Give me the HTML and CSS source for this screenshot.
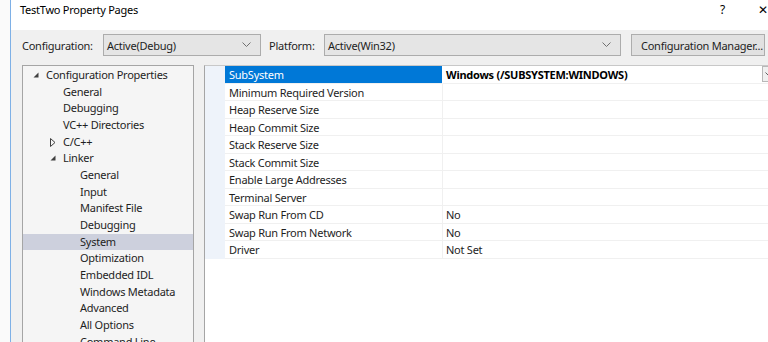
FILE: index.html
```html
<!DOCTYPE html>
<html lang="en">
<head>
    <meta charset="UTF-8">
    <title>TestTwo Property Pages</title>
<link rel="stylesheet" href="styles.css">
</head>
<body>
<div class="dialog">
    <div class="titleBar">
        <span class="title">TestTwo Property Pages</span>
        <span class="help">?</span>
        <span class="close">&#x2715;</span>
    </div>
    <div class="toolbar">
        <span class="label">Configuration:</span>
        <div class="combo configCombo">
            <span>Active(Debug)</span>
            <svg class="chev" width="9" height="6" viewBox="0 0 9 6"><polyline points="0.5,0.5 4.5,4.5 8.5,0.5" fill="none" stroke="#707070" stroke-width="1"/></svg>
        </div>
        <span class="label platLabel">Platform:</span>
        <div class="combo platCombo">
            <span>Active(Win32)</span>
            <svg class="chev" width="9" height="6" viewBox="0 0 9 6"><polyline points="0.5,0.5 4.5,4.5 8.5,0.5" fill="none" stroke="#707070" stroke-width="1"/></svg>
        </div>
        <button type="button" class="managerBtn">Configuration Manager...</button>
    </div>
    <div class="main">
        <div class="tree">
            <div class="node lvl1"><svg class="arrow" width="8" height="8" viewBox="0 0 8 8"><polygon points="6.5,1.5 6.5,6.5 1.5,6.5" fill="#404040"/></svg>Configuration Properties</div>
            <div class="node lvl2">General</div>
            <div class="node lvl2">Debugging</div>
            <div class="node lvl2">VC++ Directories</div>
            <div class="node lvl2"><svg class="arrow" width="8" height="9" viewBox="0 0 8 9"><polygon points="1.5,0.5 6,4.5 1.5,8.5" fill="none" stroke="#404040" stroke-width="1"/></svg>C/C++</div>
            <div class="node lvl2"><svg class="arrow" width="8" height="8" viewBox="0 0 8 8"><polygon points="6.5,1.5 6.5,6.5 1.5,6.5" fill="#404040"/></svg>Linker</div>
            <div class="node lvl3">General</div>
            <div class="node lvl3">Input</div>
            <div class="node lvl3">Manifest File</div>
            <div class="node lvl3">Debugging</div>
            <div class="node lvl3 selected">System</div>
            <div class="node lvl3">Optimization</div>
            <div class="node lvl3">Embedded IDL</div>
            <div class="node lvl3">Windows Metadata</div>
            <div class="node lvl3">Advanced</div>
            <div class="node lvl3">All Options</div>
            <div class="node lvl3">Command Line</div>
        </div>
        <div class="grid">
            <div class="row current">
                <div class="gutter"></div>
                <div class="name">SubSystem</div>
                <div class="value bold">Windows (/SUBSYSTEM:WINDOWS)
                    <span class="dropBtn"><svg width="7" height="5" viewBox="0 0 7 5"><polyline points="0.5,0.5 3.5,3.5 6.5,0.5" fill="none" stroke="#606060" stroke-width="1"/></svg></span>
                </div>
            </div>
            <div class="row"><div class="gutter"></div><div class="name">Minimum Required Version</div><div class="value"></div></div>
            <div class="row"><div class="gutter"></div><div class="name">Heap Reserve Size</div><div class="value"></div></div>
            <div class="row"><div class="gutter"></div><div class="name">Heap Commit Size</div><div class="value"></div></div>
            <div class="row"><div class="gutter"></div><div class="name">Stack Reserve Size</div><div class="value"></div></div>
            <div class="row"><div class="gutter"></div><div class="name">Stack Commit Size</div><div class="value"></div></div>
            <div class="row"><div class="gutter"></div><div class="name">Enable Large Addresses</div><div class="value"></div></div>
            <div class="row"><div class="gutter"></div><div class="name">Terminal Server</div><div class="value"></div></div>
            <div class="row"><div class="gutter"></div><div class="name">Swap Run From CD</div><div class="value">No</div></div>
            <div class="row"><div class="gutter"></div><div class="name">Swap Run From Network</div><div class="value">No</div></div>
            <div class="row"><div class="gutter"></div><div class="name">Driver</div><div class="value">Not Set</div></div>
        </div>
    </div>
</div>
</body>
</html>
```

FILE: styles.css
```css
body {
    margin: 0;
    width: 768px;
    height: 342px;
    overflow: hidden;
    background: #fafafa;
    font-family: "Segoe UI", "Noto Sans", sans-serif;
    font-size: 11px;
    letter-spacing: -0.25px;
    color: #1e1e1e;
}
div.dialog {
    margin-left: 10px;
    height: 342px;
    border-left: 1px solid #7eb0e6;
    background: #f0f0f0;
    display: flex;
    flex-direction: column;
}
div.titleBar {
    height: 30px;
    background: #ffffff;
    display: flex;
    align-items: center;
    padding: 0 0 12px 9px;
    box-sizing: border-box;
    color: #000000;
}
.title {
    flex: 1;
}
.help {
    width: 38px;
    font-size: 12px;
}
.close {
    width: 10px;
    font-size: 12px;
    overflow: hidden;
}
div.toolbar {
    height: 22px;
    margin-top: 4px;
    display: flex;
    align-items: center;
    padding-left: 11px;
    overflow: hidden;
}
div.toolbar > * {
    flex: none;
}
.label {
    width: 81px;
}
.platLabel {
    width: 55px;
    margin-left: 8px;
}
div.combo {
    height: 22px;
    box-sizing: border-box;
    border: 1px solid #acacac;
    background: #e5e5e5;
    display: flex;
    align-items: center;
    padding: 0 9px 0 3px;
}
div.combo span {
    flex: 1;
}
.configCombo {
    width: 158px;
}
.platCombo {
    width: 297px;
}
.chev {
    display: block;
}
button.managerBtn {
    height: 22px;
    margin-left: 10px;
    width: 134px;
    border: 1px solid #adadad;
    background: #e1e1e1;
    font: inherit;
    letter-spacing: inherit;
    color: #1e1e1e;
    text-align: left;
    padding: 0 0 0 9px;
    white-space: nowrap;
    overflow: hidden;
}
div.main {
    flex: 1;
    display: flex;
    margin-top: 9px;
    padding-left: 11px;
    min-height: 0;
}
div.tree {
    width: 172px;
    box-sizing: border-box;
    border: 1px solid #a5a5a5;
    border-bottom: none;
    background: #f5f5f5;
    padding-top: 1px;
}
div.node {
    height: 16.67px;
    line-height: 16.67px;
    white-space: nowrap;
    position: relative;
}
.lvl1 {
    padding-left: 23px;
}
.lvl2 {
    padding-left: 40px;
}
.lvl3 {
    padding-left: 57px;
}
div.node .arrow {
    position: absolute;
    top: 4px;
    margin-left: -14px;
}
div.node.selected {
    background: #cdd0dd;
}
div.grid {
    flex: 1;
    margin-left: 10px;
    border-left: 1px solid #a5a5a5;
    border-top: 1px solid #c8c8c8;
    background: #ffffff;
}
div.row {
    height: 17.5px;
    display: flex;
    line-height: 17.5px;
}
div.gutter {
    width: 20px;
    background: #eef3fa;
}
div.name {
    width: 218px;
    padding-left: 4px;
    box-sizing: border-box;
    border-right: 1px solid #f0f0f0;
    border-bottom: 1px solid #f0f0f0;
    white-space: nowrap;
}
div.value {
    flex: 1;
    padding-left: 3px;
    border-bottom: 1px solid #f0f0f0;
    position: relative;
    white-space: nowrap;
}
.row.current .name {
    background: #0078d7;
    color: #ffffff;
    border-right-color: #ffffff;
}
.bold {
    font-weight: bold;
    color: #000000;
}
span.dropBtn {
    position: absolute;
    right: -6px;
    top: 0;
    width: 12px;
    height: 16px;
    box-sizing: border-box;
    border: 1px solid #b8b8b8;
    background: #f0f0f0;
    display: flex;
    align-items: center;
    padding-left: 2px;
}
```
